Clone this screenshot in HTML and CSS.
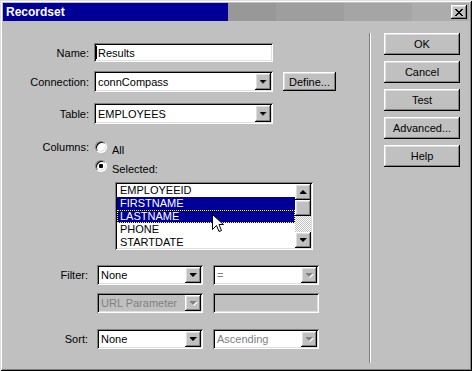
FILE: index.html
```html
<!DOCTYPE html>
<html lang="en">
<head>
    <meta charset="UTF-8">
    <title>Recordset</title>
    <link rel="stylesheet" href="styles.css">
</head>
<body>
    <div class="window">
        <div class="titlebar">
            <span class="title">Recordset</span>
            <span class="close raised">
                <svg width="8" height="7" viewBox="0 0 8 7"><path d="M0 0h2v1H0zM6 0h2v1H6zM1 1h2v1H1zM5 1h2v1H5zM2 2h4v1H2zM3 3h2v1H3zM2 4h4v1H2zM1 5h2v1H1zM5 5h2v1H5zM0 6h2v1H0zM6 6h2v1H6z"/></svg>
            </span>
        </div>

        <div class="body">
            <div class="form">
                <div class="row row-name">
                    <span class="label">Name:</span>
                    <div class="field sunken name-field"><span class="caret"></span>Results</div>
                </div>

                <div class="row row-conn">
                    <span class="label">Connection:</span>
                    <div class="combo sunken wide">
                        <span class="value">connCompass</span>
                        <span class="drop raised"></span>
                    </div>
                    <button class="btn raised define">Define...</button>
                </div>

                <div class="row row-table">
                    <span class="label">Table:</span>
                    <div class="combo sunken wide">
                        <span class="value">EMPLOYEES</span>
                        <span class="drop raised"></span>
                    </div>
                </div>

                <div class="row row-all">
                    <span class="label">Columns:</span>
                    <span class="radio"></span>
                    <span class="radio-text">All</span>
                </div>

                <div class="row row-selected">
                    <span class="radio checked"></span>
                    <span class="radio-text">Selected:</span>
                </div>

                <div class="listbox sunken">
                    <div class="items">
                        <div class="item">EMPLOYEEID</div>
                        <div class="item selected">FIRSTNAME</div>
                        <div class="item selected focused">LASTNAME</div>
                        <div class="item">PHONE</div>
                        <div class="item">STARTDATE</div>
                    </div>
                    <div class="scrollbar">
                        <span class="sb-btn raised up"></span>
                        <span class="sb-thumb raised"></span>
                        <span class="sb-track"></span>
                        <span class="sb-btn raised down"></span>
                    </div>
                </div>

                <div class="row row-filter">
                    <span class="label label-sm">Filter:</span>
                    <div class="combo sunken small">
                        <span class="value">None</span>
                        <span class="drop raised"></span>
                    </div>
                    <div class="combo sunken small grey-text">
                        <span class="value">=</span>
                        <span class="drop raised off"></span>
                    </div>
                </div>

                <div class="row row-param">
                    <span class="label label-sm"></span>
                    <div class="combo sunken small disabled">
                        <span class="value">URL Parameter</span>
                        <span class="drop raised off"></span>
                    </div>
                    <div class="field sunken small disabled"></div>
                </div>

                <div class="row row-sort">
                    <span class="label label-sm">Sort:</span>
                    <div class="combo sunken small">
                        <span class="value">None</span>
                        <span class="drop raised"></span>
                    </div>
                    <div class="combo sunken small grey-text">
                        <span class="value">Ascending</span>
                        <span class="drop raised off"></span>
                    </div>
                </div>
            </div>

            <div class="separator"></div>

            <div class="buttons">
                <button class="btn raised side">OK</button>
                <button class="btn raised side">Cancel</button>
                <button class="btn raised side">Test</button>
                <button class="btn raised side">Advanced...</button>
                <button class="btn raised side">Help</button>
            </div>
        </div>

        <!-- mouse pointer over the list -->
        <svg class="cursor" width="13" height="20" viewBox="0 0 13 20">
            <polygon points="0.5,0.5 0.5,15.5 4.5,11.5 7,17.5 9.5,16.5 7,10.5 11.5,10.5" fill="#fff" stroke="#000" stroke-width="1"/>
        </svg>
    </div>
</body>
</html>
```

FILE: styles.css
```css
* {
    box-sizing: border-box;
}

body {
    margin: 0;
    font-family: "Liberation Sans", Arial, sans-serif;
    font-size: 11px;
    color: #000;
}

.window {
    position: relative;
    width: 472px;
    height: 371px;
    padding: 3px;
    background: #c0c0c0;
    box-shadow: inset 1px 1px #dfdfdf, inset -1px -1px #000, inset 2px 2px #fff, inset -2px -2px #808080;
}

.titlebar {
    height: 18px;
    display: flex;
    align-items: center;
    justify-content: space-between;
    padding: 0 2px 0 3px;
    background: linear-gradient(to right,
        #000099 0, #000099 225px,
        #989898 225px, #989898 273px,
        #9e9e9e 273px, #9e9e9e 341px,
        #a5a5a5 341px, #a5a5a5 409px,
        #acacac 409px);
}

.title {
    color: #fff;
    font-weight: bold;
    font-size: 12px;
}

.close {
    width: 16px;
    height: 14px;
    display: flex;
    align-items: center;
    justify-content: center;
}

.raised {
    background: #c0c0c0;
    box-shadow: inset -1px -1px #000, inset 1px 1px #fff, inset -2px -2px #808080, inset 2px 2px #dfdfdf;
}

.sunken {
    background: #fff;
    box-shadow: inset 1px 1px #808080, inset -1px -1px #fff, inset 2px 2px #000, inset -2px -2px #dfdfdf;
}

.body {
    display: flex;
    height: 347px;
}

.form {
    width: 366px;
    padding-top: 22px;
}

.row {
    display: flex;
    align-items: center;
}

.label {
    width: 86px;
    margin-right: 5px;
    text-align: right;
}

.label-sm {
    width: 85px;
    margin-right: 9px;
}

.field {
    display: flex;
    align-items: center;
    padding: 0 3px;
}

.name-field {
    width: 179px;
    height: 19px;
    padding-left: 2px;
}

.caret {
    width: 1px;
    height: 13px;
    background: #000;
    margin-right: 1px;
}

.row-name {
    height: 19px;
}

.row-conn {
    margin-top: 9px;
    height: 21px;
}

.row-table {
    margin-top: 11px;
    height: 21px;
}

.combo {
    display: flex;
    align-items: stretch;
    padding: 2px;
}

.combo .value {
    flex: 1;
    display: flex;
    align-items: center;
    padding-left: 2px;
    overflow: hidden;
    white-space: nowrap;
}

.combo.wide {
    width: 179px;
    height: 21px;
}

.combo.small {
    width: 106px;
    height: 20px;
}

.field.small {
    width: 106px;
    height: 20px;
}

.grey-text .value,
.disabled .value {
    color: #808080;
}

.sunken.disabled {
    background: #c0c0c0;
}

.drop {
    width: 16px;
    display: grid;
    place-items: center;
}

.drop::before,
.drop::after,
.sb-btn::before {
    content: "";
    grid-area: 1 / 1;
    width: 7px;
    height: 4px;
    background: #000;
    clip-path: polygon(0 0, 7px 0, 7px 1px, 6px 1px, 6px 2px, 5px 2px, 5px 3px, 4px 3px, 4px 4px, 3px 4px, 3px 3px, 2px 3px, 2px 2px, 1px 2px, 1px 1px, 0 1px);
}

.drop::after {
    display: none;
}

.drop.off::before {
    background: #808080;
    z-index: 1;
}

.drop.off::after {
    display: block;
    background: #fff;
    transform: translate(1px, 1px);
}

.btn {
    border: 0;
    padding: 0;
    font: inherit;
    color: #000;
}

.define {
    width: 53px;
    height: 19px;
    margin-left: 10px;
}

.row-all {
    margin-top: 17px;
    height: 13px;
    align-items: flex-start;
}

.row-selected {
    margin-top: 6px;
    height: 13px;
    align-items: flex-start;
    padding-left: 92px;
}

.label + .radio {
    margin-left: 1px;
}

.radio {
    width: 12px;
    height: 12px;
    border-radius: 50%;
    background: #fff;
    border: 1px solid;
    border-color: #808080 #fff #fff #808080;
    box-shadow: inset 1px 1px #000, inset -1px -1px #dfdfdf;
    display: grid;
    place-items: center;
}

.radio.checked::after {
    content: "";
    width: 4px;
    height: 4px;
    background: #000;
    border-radius: 1px;
}

.radio-text {
    margin-left: 5px;
    padding-top: 3px;
    line-height: 13px;
}

.row-all .label {
    line-height: 12px;
    padding-top: 0;
}

.listbox {
    display: flex;
    margin: 9px 0 0 112px;
    width: 198px;
    height: 68px;
    padding: 2px;
}

.items {
    flex: 1;
    overflow: hidden;
}

.item {
    height: 13px;
    line-height: 13px;
    padding-left: 3px;
    white-space: nowrap;
}

.item.selected {
    background: #000099;
    color: #fff;
}

.item.focused {
    border: 1px dotted #ffff00;
    padding-left: 2px;
    line-height: 11px;
}

.scrollbar {
    width: 16px;
    display: flex;
    flex-direction: column;
}

.sb-btn,
.sb-thumb,
.sb-track {
    height: 16px;
    flex: none;
}

.sb-btn {
    display: grid;
    place-items: center;
}

.sb-btn.up::before {
    transform: scaleY(-1);
}

.sb-track {
    background: repeating-conic-gradient(#c0c0c0 0 25%, #fff 0 50%) 0 0 / 2px 2px;
}

.row-filter {
    margin-top: 15px;
    height: 20px;
    gap: 10px;
}

.row-filter .label,
.row-param .label,
.row-sort .label {
    margin-right: -1px;
}

.row-param {
    margin-top: 8px;
    height: 20px;
    gap: 10px;
}

.row-sort {
    margin-top: 16px;
    height: 20px;
    gap: 10px;
}

.separator {
    width: 2px;
    height: 330px;
    margin-top: 12px;
    border-left: 1px solid #808080;
    border-right: 1px solid #fff;
}

.buttons {
    margin-left: 13px;
    padding-top: 12px;
    display: flex;
    flex-direction: column;
    gap: 6px;
}

.side {
    width: 76px;
    height: 22px;
}

.cursor {
    position: absolute;
    left: 212px;
    top: 214px;
}
```
